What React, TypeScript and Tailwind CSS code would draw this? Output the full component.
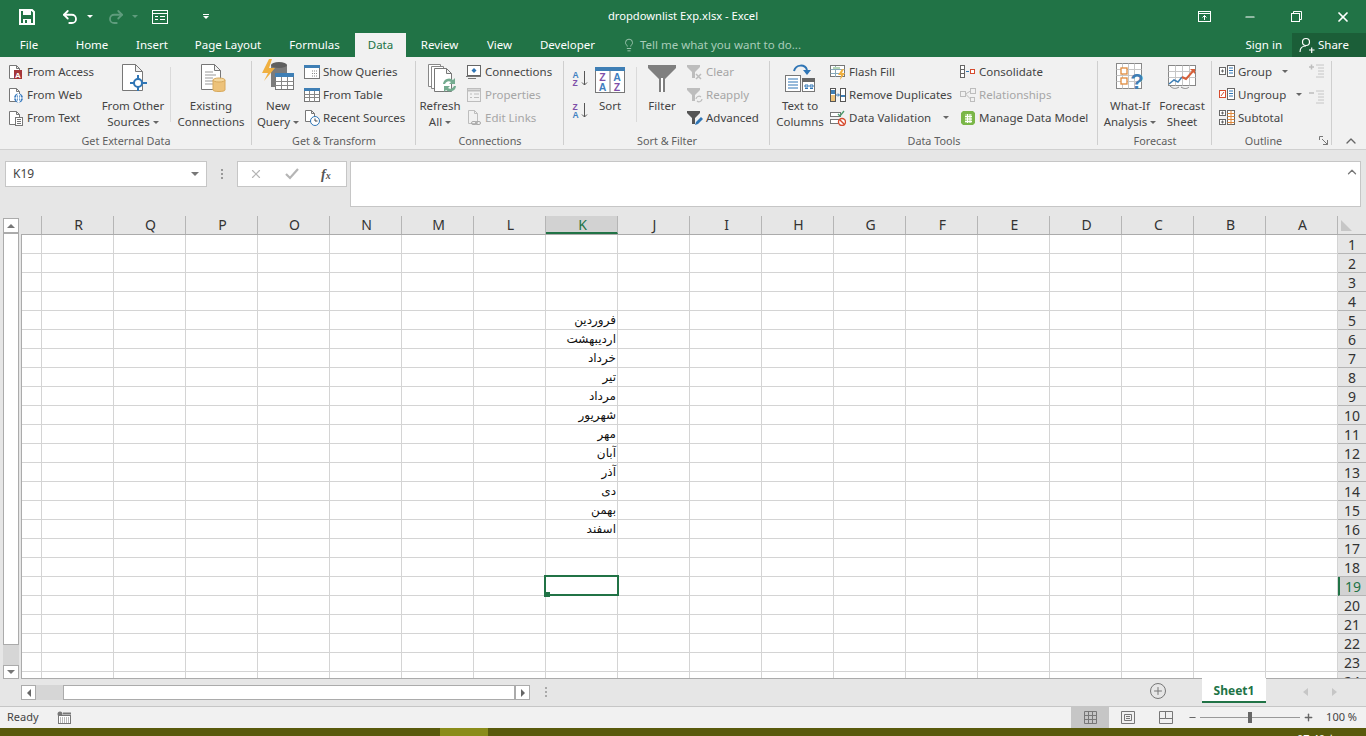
import type { ReactNode } from 'react';
import {
  ChevronUp,
  Lightbulb,
  Minus,
  Plus,
  Undo2,
  Redo2,
  X,
} from 'lucide-react';

const font = "font-['Noto_Sans','Open_Sans',sans-serif]";
const columns = ['R', 'Q', 'P', 'O', 'N', 'M', 'L', 'K', 'J', 'I', 'H', 'G', 'F', 'E', 'D', 'C', 'B', 'A'];
const months = ['فروردین', 'اردیبهشت', 'خرداد', 'تیر', 'مرداد', 'شهریور', 'مهر', 'آبان', 'آذر', 'دی', 'بهمن', 'اسفند'];
const rows = Array.from({ length: 24 }, (_, i) => i + 1);

function Caret({ className = '' }: { className?: string }) {
  return <span className={`inline-block w-0 h-0 border-x-[3px] border-x-transparent border-t-[3px] border-t-[#666] align-middle ${className}`} />;
}

function Icon({ size = 16, children }: { size?: number; children: ReactNode }) {
  return (
    <svg width={size} height={size} viewBox={`0 0 ${size} ${size}`} fill="none" className="shrink-0">
      {children}
    </svg>
  );
}

function Page({ stroke = '#777' }: { stroke?: string }) {
  return <path d="M1.500 1.500h7l3 3v10h-10z M8.500 1.500v3h3" stroke={stroke} fill="#fff" />;
}

function Small({ icon, label, off, caret, gap = 'ml-[3px]' }: { icon: ReactNode; label: string; off?: boolean; caret?: string; gap?: string }) {
  return (
    <div className={`h-[23px] flex items-center whitespace-nowrap ${off ? 'text-[#a6a6a6]' : 'text-[#444]'}`}>
      {icon}
      <span className={gap}>{label}</span>
      {caret && <Caret className={caret} />}
    </div>
  );
}

function Large({ w, icon, lines, caret, nudge = '' }: { w: string; icon: ReactNode; lines: string[]; caret?: boolean; nudge?: string }) {
  return (
    <div className={`${w} shrink-0 flex flex-col items-center text-[#444] leading-[16px] whitespace-nowrap`}>
      <div className={`h-[33px] flex items-end ${nudge}`}>{icon}</div>
      <div className="mt-[5px]">{lines[0]}</div>
      <div>
        {lines[1]}
        {caret && <Caret className="ml-[3px]" />}
      </div>
    </div>
  );
}

function Group({ w, label, children, labelPad = '' }: { w: string; label: string; children: ReactNode; labelPad?: string }) {
  return (
    <div className={`${w} shrink-0 h-full flex flex-col relative`}>
      <div className="h-[77px] pt-[3px] flex">{children}</div>
      <div className={`text-center text-[#5f5f5f] text-[10.8px] leading-[14px] ${labelPad}`}>{label}</div>
      <div className="absolute right-0 top-[4px] bottom-[4px] w-px bg-[#cfcfcf]" />
    </div>
  );
}

function Sep() {
  return <div className="w-px h-[55px] mt-[7px] bg-[#dadada] shrink-0" />;
}

const FromAccess = (
  <Icon>
    <Page />
    <rect x="6" y="6" width="8" height="9" fill="#a4373a" />
    <text x="10" y="13.500" fontSize="8" fontWeight="700" fill="#fff" textAnchor="middle" fontFamily="Liberation Sans">A</text>
  </Icon>
);
const FromWeb = (
  <Icon>
    <Page />
    <circle cx="10.500" cy="11" r="4.500" fill="#3f7fc1" />
    <path d="M6 11h9M10.500 6.500v9" stroke="#fff" />
    <ellipse cx="10.500" cy="11" rx="2" ry="4" stroke="#fff" />
  </Icon>
);
const FromText = (
  <Icon>
    <Page />
    <rect x="7.500" y="7.500" width="7" height="8" fill="#fff" stroke="#777" />
    <path d="M9 9.500h4M9 11.500h4M9 13.500h4" stroke="#777" />
  </Icon>
);
const FromOther = (
  <Icon size={30}>
    <path d="M3.500 1.500h13l7 7v19h-20z M16.500 1.500v7h7" stroke="#777" fill="#fff" />
    <circle cx="19" cy="20" r="4" stroke="#2f75b5" strokeWidth="2" fill="#fff" />
    <path d="M11 20h4M23 20h5M19 12v4M19 24v4" stroke="#2f75b5" strokeWidth="2" />
  </Icon>
);
const Existing = (
  <Icon size={30}>
    <path d="M3.500 1.500h13l6 6v19h-19z M16.500 1.500v6h6" stroke="#777" fill="#fff" />
    <path d="M7 9h8M7 12h11M7 15h8M7 18h8M7 21h8" stroke="#999" />
    <path d="M15 17v10c0 2 12 2 12 0V17z" fill="#edc27a" stroke="#d8a95c" />
    <ellipse cx="21" cy="17" rx="6" ry="2" fill="#f5d89e" stroke="#d8a95c" />
  </Icon>
);
const NewQuery = (
  <Icon size={34}>
    <path d="M10 6v22h16V6z" fill="#7b7b7b" />
    <ellipse cx="18" cy="6" rx="8" ry="3" fill="#5f5f5f" />
    <path d="M8 0 1 14h6L3 22 14 9H8l3-9z" fill="#f0b040" />
    <rect x="14.500" y="14.500" width="18" height="16" fill="#fff" stroke="#777" />
    <rect x="14" y="14" width="19" height="4" fill="#3f7fb5" />
    <path d="M14.500 22.500h18M14.500 26.500h18M20.500 18v12M26.500 18v12" stroke="#888" />
  </Icon>
);
const ShowQueries = (
  <Icon>
    <rect x="0.500" y="1.500" width="15" height="13" fill="#fff" stroke="#777" />
    <rect x="0" y="1" width="16" height="3" fill="#3f7fb5" />
    <path d="M8 7h5M8 9.500h5M8 12h5" stroke="#888" strokeDasharray="1 1" />
  </Icon>
);
const FromTable = (
  <Icon>
    <rect x="0.500" y="1.500" width="15" height="13" fill="#fff" stroke="#777" />
    <rect x="0" y="1" width="16" height="3" fill="#3f7fb5" />
    <path d="M0.500 7.500h15M0.500 10.500h15M5.500 4v11M10.500 4v11" stroke="#888" />
  </Icon>
);
const Recent = (
  <Icon>
    <path d="M1.500 0.500h6l3 3v8h-9z M7.500 0.500v3h3" stroke="#777" fill="#fff" />
    <circle cx="11" cy="11" r="4.500" fill="#fff" stroke="#2f75b5" />
    <path d="M11 8.500V11h2.500" stroke="#444" />
  </Icon>
);
const Refresh = (
  <Icon size={30}>
    <path d="M1.500 1.500h12v22h-12z" stroke="#888" fill="#fff" />
    <path d="M4.500 3.500h12v22h-12z" stroke="#888" fill="#fff" />
    <path d="M7.500 5.500h12l5 5v18h-17z M19.500 5.500v5h5" stroke="#777" fill="#fff" />
    <path d="M16 21a6 6 0 0 1 10-4l2-2v6h-6l2-2a4 4 0 0 0-6 2z" fill="#74ab8f" />
    <path d="M29 23a6 6 0 0 1-10 4l-2 2v-6h6l-2 2a4 4 0 0 0 6-2z" fill="#74ab8f" />
  </Icon>
);
const Connections = (
  <Icon>
    <rect x="1.500" y="1.500" width="13" height="10" fill="#fff" stroke="#666" />
    <path d="M8 4l2.500 2.500L8 9 5.500 6.500z" fill="#2f75b5" />
    <path d="M0 12.500h15M2 14.500h8" stroke="#777" />
  </Icon>
);
const Properties = (
  <Icon>
    <rect x="1.500" y="1.500" width="13" height="13" fill="#f1f1f1" stroke="#bdbdbd" />
    <path d="M1.500 3.500h13" stroke="#bdbdbd" strokeWidth="2" />
    <path d="M4 7h2M8 7h5M4 10.500h2M8 10.500h5" stroke="#bdbdbd" />
  </Icon>
);
const EditLinks = (
  <Icon>
    <path d="M2.500 0.500h6l3 3v10h-9z M8.500 0.500v3h3" stroke="#bdbdbd" fill="#f1f1f1" />
    <rect x="5.500" y="11.500" width="5" height="3" rx="1.500" stroke="#aaa" />
    <rect x="9.500" y="11.500" width="5" height="3" rx="1.500" stroke="#aaa" />
  </Icon>
);
function SortAZ({ top, bottom }: { top: string; bottom: string }) {
  return (
    <svg width="16" height="17" viewBox="0 0 16 17" className="shrink-0">
      <text x="0.500" y="8" fontSize="8.500" fontWeight="700" fontFamily="Liberation Sans" fill={top === 'A' ? '#3f7fc1' : '#7e4fa8'}>{top}</text>
      <text x="0.500" y="16" fontSize="8.500" fontWeight="700" fontFamily="Liberation Sans" fill={bottom === 'A' ? '#3f7fc1' : '#7e4fa8'}>{bottom}</text>
      <path d="M12.500 1v14M10 12.500l2.500 2.500 2.500-2.500" stroke="#555" fill="none" />
    </svg>
  );
}
const SortBig = (
  <svg width="30" height="26" viewBox="0 0 30 26">
    <rect x="0.500" y="0.500" width="29" height="25" fill="#fff" stroke="#777" />
    <rect x="0" y="0" width="30" height="4" fill="#3f7fb5" />
    <path d="M15 4v22" stroke="#777" />
    <g fontSize="10.500" fontWeight="700" fontFamily="Liberation Sans" textAnchor="middle">
      <text x="7.500" y="14" fill="#7e4fa8">Z</text>
      <text x="7.500" y="24" fill="#3f7fc1">A</text>
      <text x="22" y="14" fill="#3f7fc1">A</text>
      <text x="22" y="24" fill="#7e4fa8">Z</text>
    </g>
  </svg>
);
const Filter = (
  <Icon size={28}>
    <path d="M0 0h28v3L17 14v13h-6V14L0 3z" fill="#7f7f7f" />
    <path d="M13 13v14h2V13z" fill="#fff" />
  </Icon>
);
function SmallFunnel({ color }: { color: string }) {
  return <path d="M0 1h13v2L8 8v6H5V8L0 3z" fill={color} />;
}
const Clear = (
  <Icon>
    <SmallFunnel color="#bdbdbd" />
    <path d="M9 10l5 5M14 10l-5 5" stroke="#bdbdbd" strokeWidth="1.500" />
  </Icon>
);
const Reapply = (
  <Icon>
    <SmallFunnel color="#bdbdbd" />
    <path d="M9 12a3 3 0 0 1 5-2M15 12a3 3 0 0 1-5 2" stroke="#bdbdbd" strokeWidth="1.200" />
  </Icon>
);
const Advanced = (
  <Icon>
    <SmallFunnel color="#555" />
    <path d="M8 15l1-3 5-5 2 2-5 5z" fill="#2f75b5" />
  </Icon>
);
const TextCols = (
  <Icon size={30}>
    <rect x="0.500" y="12.500" width="15" height="16" fill="#fff" stroke="#777" />
    <path d="M3 16h10M3 19h10M3 22h10M3 25h10" stroke="#2f75b5" />
    <rect x="17.500" y="15.500" width="12" height="13" fill="#fff" stroke="#777" />
    <rect x="17" y="15" width="13" height="4" fill="#666" />
    <path d="M20 22h3v2h-3zM25 22h3v2h-3zM20 25.500h3M25 25.500h3" stroke="#2f75b5" />
    <path d="M9 8C11 1 20 1 22 7" stroke="#2f75b5" strokeWidth="2" />
    <path d="M18 7h8l-4 5z" fill="#2f75b5" />
  </Icon>
);
const FlashFill = (
  <Icon>
    <rect x="0.500" y="1.500" width="14" height="11" fill="#fff" stroke="#777" />
    <path d="M0.500 5.500h14M0.500 9.500h14M5.500 2v11" stroke="#8ab" />
    <rect x="3" y="3" width="7" height="2" fill="#b5d5b5" />
    <path d="M12 5l-4 6h3l-1 5 5-7h-3l2-4z" fill="#f0b040" />
  </Icon>
);
const RemoveDup = (
  <Icon>
    <rect x="0.500" y="1.500" width="5" height="13" fill="#fff" stroke="#555" />
    <rect x="10.500" y="1.500" width="5" height="13" fill="#fff" stroke="#555" />
    <path d="M1 3h4v4H1z" fill="#3f7fb5" />
    <path d="M1 8h4v6H1z" fill="#edc27a" />
    <path d="M11 8h4v2h-4z" fill="#3f7fb5" />
    <path d="M6 8h3M8 6.500 9.500 8 8 9.500" stroke="#2f75b5" />
  </Icon>
);
const DataVal = (
  <Icon>
    <rect x="0.500" y="2.500" width="10" height="4" fill="#fff" stroke="#777" />
    <rect x="0.500" y="9.500" width="9" height="4" fill="#fff" stroke="#777" />
    <path d="M8 4l2 2 4-5" stroke="#4c9a6b" strokeWidth="1.300" />
    <circle cx="12" cy="12" r="3.500" fill="#fff" stroke="#d64b2e" strokeWidth="1.400" />
    <path d="M9.500 9.500l5 5" stroke="#d64b2e" strokeWidth="1.400" />
  </Icon>
);
const Consolidate = (
  <Icon>
    <rect x="0.500" y="1.500" width="4" height="4" fill="#fff" stroke="#666" />
    <rect x="0.500" y="5.500" width="4" height="4" fill="#fff" stroke="#666" />
    <rect x="0.500" y="9.500" width="4" height="4" fill="#fff" stroke="#666" />
    <path d="M6 7.500h3" stroke="#2f75b5" />
    <rect x="10.500" y="5.500" width="4" height="4" fill="#fff" stroke="#d64b2e" />
  </Icon>
);
const Relations = (
  <Icon>
    <g stroke="#bdbdbd" fill="#f1f1f1">
      <rect x="0.500" y="4.500" width="5" height="5" />
      <rect x="10.500" y="1.500" width="5" height="5" />
      <rect x="10.500" y="10.500" width="4" height="4" />
      <path d="M5.500 7 10.500 4M5.500 7l5 5" />
    </g>
  </Icon>
);
const DataModel = (
  <Icon>
    <path d="M3 1h10l2 2v10l-2 2H3l-2-2V3z" fill="#7ab648" />
    <path d="M5 4h7v9H5z" fill="#a5d17f" />
    <path d="M5 6.500h7M5 9h7M5 11.500h7M7.500 4v9M10 4v9" stroke="#fff" />
  </Icon>
);
const WhatIf = (
  <Icon size={32}>
    <rect x="2.500" y="2.500" width="25" height="25" fill="#fff" stroke="#888" />
    <path d="M2.500 8.500h25M2.500 14.500h25M2.500 20.500h25M8.500 2.500v25M14.500 2.500v25M20.500 2.500v25" stroke="#c6c6c6" />
    <rect x="7" y="7" width="6" height="6" stroke="#e08a3c" strokeWidth="1.300" fill="#fff" />
    <rect x="7" y="17" width="6" height="6" stroke="#e08a3c" strokeWidth="1.300" fill="#fff" />
    <text x="23" y="28" fontSize="22" fontWeight="700" fontFamily="Liberation Sans" fill="#3f7fb5" textAnchor="middle">?</text>
  </Icon>
);
const Forecast = (
  <Icon size={30}>
    <rect x="1.500" y="2.500" width="27" height="20" fill="#fff" stroke="#888" />
    <path d="M1.500 8.500h27M1.500 14.500h27M8.500 2.500v20M15.500 2.500v20M22.500 2.500v20" stroke="#c6c6c6" />
    <path d="M2 21l5-4 4 2 4-5" stroke="#3f7fb5" strokeWidth="1.500" />
    <path d="M15 14l4 2 8-9" stroke="#d6603a" strokeWidth="2" />
    <path d="M23 6h5v5z" fill="#d6603a" />
    <path d="M3 23c3 3 6 3 9 1M14 24c3 2 6 2 8 0" stroke="#888" />
  </Icon>
);
function Outline({ mark }: { mark: 'plus' | 'minus' | 'sub' }) {
  return (
    <Icon>
      {mark === 'sub' ? (
        <>
          <rect x="0.500" y="0.500" width="6" height="5" fill="#fff" stroke="#666" />
          <rect x="0.500" y="9.500" width="6" height="5" fill="#fff" stroke="#666" />
          <path d="M2 3h3M3.500 1.500v3M2 12h3M3.500 10.500v3" stroke="#666" />
          <rect x="8.500" y="0.500" width="7" height="14" fill="#fff" stroke="#666" />
          <path d="M8.500 3.500h7M8.500 6.500h7M8.500 9.500h7M8.500 12.500h7M12 0.500v14" stroke="#e08a3c" />
        </>
      ) : (
        <>
          <rect x="0.500" y="3.500" width="6" height="7" fill="#fff" stroke={mark === 'plus' ? '#666' : '#d64b2e'} />
          <path d={mark === 'plus' ? 'M2 7h3M3.500 5.500v3' : 'M2 9l3-4'} stroke={mark === 'plus' ? '#666' : '#d64b2e'} />
          <rect x="8.500" y="1.500" width="7" height="11" fill="#fff" stroke="#666" />
          <path d="M10 4h4M10 6.500h4M10 9h4" stroke="#2f75b5" />
        </>
      )}
    </Icon>
  );
}
function DetailIcon({ plus }: { plus?: boolean }) {
  return (
    <Icon>
      <path d={plus ? 'M0 5h5M2.500 2.500v5' : 'M0 5h5'} stroke="#bdbdbd" strokeWidth="1.500" />
      <path d="M7 3h8M9 6h6M9 9h6M9 12h6M7 15h8" stroke="#c6c6c6" />
    </Icon>
  );
}

function TitleBar() {
  return (
    <div className="h-[33px] flex items-center relative text-white">
      <svg width="16" height="16" viewBox="0 0 16 16" className="ml-[19px] shrink-0" fill="none">
        <path d="M1 1h12l2 2v12H1z" stroke="#fff" strokeWidth="2" />
        <path d="M4 1h8v5H4zM4 10h8v5H4z" fill="#fff" />
        <path d="M6 11h2v3H6z" fill="#217346" />
      </svg>
      <Undo2 size={18} strokeWidth={2.4} className="ml-[26px]" />
      <Caret className="ml-[8px] !border-t-white" />
      <Redo2 size={18} strokeWidth={2.4} className="ml-[14px] text-[#5f9c7d]" />
      <Caret className="ml-[7px] !border-t-[#5f9c7d]" />
      <svg width="16" height="14" viewBox="0 0 16 14" className="ml-[14px]" fill="none" stroke="#fff">
        <rect x="0.500" y="0.500" width="15" height="13" />
        <path d="M0 3.500h16M3 6.500h3M3 9.500h3M8 6.500h5M8 9.500h5" />
      </svg>
      <div className="ml-[35px] flex flex-col items-center gap-[1px]">
        <div className="w-[6px] h-px bg-white" />
        <Caret className="!border-t-white" />
      </div>
      <div className="absolute left-0 right-0 text-center text-[11.2px] pointer-events-none">dropdownlist Exp.xlsx - Excel</div>
      <div className="ml-auto flex items-center">
        <svg width="14" height="11" viewBox="0 0 14 11" fill="none" stroke="#fff">
          <rect x="0.500" y="0.500" width="12" height="10" />
          <path d="M0 2.500h13M6.500 9V4.500M4.500 6.500l2-2 2 2" />
        </svg>
        <Minus size={14} strokeWidth={2} className="ml-[31px]" />
        <svg width="11" height="11" viewBox="0 0 11 11" fill="none" stroke="#fff" className="ml-[34px]">
          <rect x="0.500" y="2.500" width="8" height="8" />
          <path d="M2.500 2.500v-2h8v8h-2" />
        </svg>
        <X size={16} strokeWidth={2.600} className="ml-[33px] mr-[15px]" />
      </div>
    </div>
  );
}

function TabStrip() {
  return (
    <div className="h-[24px] flex text-[11.5px] text-white leading-[24px] relative">
      <div className="w-[58px] text-center">File</div>
      <div className="w-[68px] text-center">Home</div>
      <div className="w-[52px] text-center">Insert</div>
      <div className="w-[100px] text-center">Page Layout</div>
      <div className="w-[73px] mr-[4px] text-center">Formulas</div>
      <div className="w-[51px] text-center bg-[#f1f1f1] text-[#217346]">Data</div>
      <div className="w-[67px] text-center">Review</div>
      <div className="w-[53px] text-center">View</div>
      <div className="w-[83px] text-center">Developer</div>
      <div className="ml-[13px] flex items-center text-[#a9cdb9]">
        <Lightbulb size={14} strokeWidth={1.500} />
        <span className="ml-[4px]">Tell me what you want to do...</span>
      </div>
      <div className="ml-auto mr-[10px]">Sign in</div>
      <div className="w-[74px] bg-[#1b5e38] flex items-center">
        <svg width="16" height="16" viewBox="0 0 16 16" fill="none" stroke="#fff" strokeWidth="1.200" className="ml-[7px]">
          <circle cx="7" cy="5" r="3.500" />
          <path d="M1 15c0-4 2-6 6-6M10 13h5.500M12.700 10.500V16" />
        </svg>
        <span className="ml-[3px]">Share</span>
      </div>
    </div>
  );
}

function Ribbon() {
  return (
    <div className="h-[93px] bg-[#f1f1f1] border-b border-[#d0d0d0] flex text-[11.5px] relative">
      <Group w="w-[252px]" label="Get External Data">
        <div className="w-[96px] pl-2 shrink-0">
          <Small icon={FromAccess} label="From Access" />
          <Small icon={FromWeb} label="From Web" />
          <Small icon={FromText} label="From Text" />
        </div>
        <Large w="w-[74px]" icon={FromOther} lines={['From Other', 'Sources']} caret nudge="ml-[2px]" />
        <Sep />
        <Large w="w-[80px]" icon={Existing} lines={['Existing', 'Connections']} nudge="ml-[3px]" />
      </Group>
      <Group w="w-[164px]" label="Get & Transform">
        <Large w="w-[52px]" icon={NewQuery} lines={['New', 'Query']} caret />
        <div>
          <Small icon={ShowQueries} label="Show Queries" />
          <Small icon={FromTable} label="From Table" />
          <Small icon={Recent} label="Recent Sources" />
        </div>
      </Group>
      <Group w="w-[148px]" label="Connections">
        <Large w="w-[48px]" icon={Refresh} lines={['Refresh', 'All']} caret nudge="ml-[3px]" />
        <div className="ml-[2px]">
          <Small icon={Connections} label="Connections" />
          <Small icon={Properties} label="Properties" off />
          <Small icon={EditLinks} label="Edit Links" off />
        </div>
      </Group>
      <Group w="w-[206px]" label="Sort & Filter">
        <div className="w-[26px] pl-2 pt-[10px] shrink-0 flex flex-col gap-[15px]">
          <SortAZ top="A" bottom="Z" />
          <SortAZ top="Z" bottom="A" />
        </div>
        <Large w="w-[40px]" icon={SortBig} lines={['Sort', '']} />
        <div className="w-[6px] shrink-0" />
        <Sep />
        <Large w="w-[50px]" icon={Filter} lines={['Filter', '']} />
        <div>
          <Small icon={Clear} label="Clear" off />
          <Small icon={Reapply} label="Reapply" off />
          <Small icon={Advanced} label="Advanced" />
        </div>
      </Group>
      <Group w="w-[328px]" label="Data Tools">
        <Large w="w-[60px]" icon={TextCols} lines={['Text to', 'Columns']} />
        <div className="w-[130px] shrink-0">
          <Small icon={FlashFill} label="Flash Fill" />
          <Small icon={RemoveDup} label="Remove Duplicates" />
          <Small icon={DataVal} label="Data Validation" caret="ml-[12px]" />
        </div>
        <div>
          <Small icon={Consolidate} label="Consolidate" />
          <Small icon={Relations} label="Relationships" off />
          <Small icon={DataModel} label="Manage Data Model" />
        </div>
      </Group>
      <Group w="w-[114px]" label="Forecast">
        <div className="w-[2px] shrink-0" />
        <Large w="w-[60px]" icon={WhatIf} lines={['What-If', 'Analysis']} caret />
        <Large w="w-[44px]" icon={Forecast} lines={['Forecast', 'Sheet']} />
      </Group>
      <Group w="w-[120px]" label="Outline" labelPad="pr-[17px]">
        <div className="w-[97px] pl-[7px] shrink-0">
          <Small icon={<Outline mark="plus" />} label="Group" caret="ml-[10px]" />
          <Small icon={<Outline mark="minus" />} label="Ungroup" caret="ml-[10px]" />
          <Small icon={<Outline mark="sub" />} label="Subtotal" />
        </div>
        <div className="flex flex-col gap-[10px] pt-[2px]">
          <DetailIcon plus />
          <DetailIcon />
        </div>
        <svg width="9" height="9" viewBox="0 0 9 9" fill="none" stroke="#777" className="absolute right-[4px] bottom-[4px]">
          <path d="M.5 4V.5H4M8.500 8.500 3 3" />
          <path d="M8.500 4v4.500H4" />
        </svg>
      </Group>
      <ChevronUp size={16} strokeWidth={2} className="absolute left-[1343px] top-[76px] text-[#666]" />
    </div>
  );
}

function FormulaBar() {
  return (
    <div className="h-[66px] bg-[#e6e6e6] flex items-start pt-[11px] pl-[5px] text-[12px] relative">
      <div className="w-[202px] h-[26px] bg-white border border-[#c6c6c6] flex items-center justify-between px-[7px] text-[#444]">
        K19
        <div className="w-0 h-0 border-x-[4px] border-x-transparent border-t-[4px] border-t-[#777]" />
      </div>
      <div className="w-[30px] h-[26px] flex flex-col items-center justify-center gap-[2px]">
        <div className="w-[2px] h-[2px] bg-[#999]" />
        <div className="w-[2px] h-[2px] bg-[#999]" />
        <div className="w-[2px] h-[2px] bg-[#999]" />
      </div>
      <div className="w-[110px] h-[26px] bg-white border border-[#c6c6c6] flex items-center">
        <X size={14} strokeWidth={2} className="ml-[11px] text-[#b5b5b5]" />
        <svg width="14" height="12" viewBox="0 0 14 12" fill="none" stroke="#b5b5b5" strokeWidth="2.200" className="ml-[22px]"><path d="M1 6l4 4 8-9" /></svg>
        <span className="ml-[22px] font-['Liberation_Serif',serif] italic font-bold text-[#555] text-[14px]">f<span className="text-[10px]">x</span></span>
      </div>
      <div className="w-[1011px] h-[46px] ml-[3px] bg-white border border-[#c6c6c6]" />
      <ChevronUp size={14} strokeWidth={2.200} className="absolute left-[1345px] top-[15px] text-[#777]" />
    </div>
  );
}

function Sheet() {
  return (
    <div className="h-[463px] bg-[#e6e6e6] flex relative overflow-hidden">
      <div className="w-[21px] shrink-0 pl-[3px] pt-[2px]">
        <div className="w-[16px] h-[15px] bg-white border border-[#ababab] flex items-center justify-center">
          <div className="w-0 h-0 border-x-[4px] border-x-transparent border-b-[4px] border-b-[#777]" />
        </div>
        <div className="w-[16px] h-[412px] bg-white border border-[#ababab]" />
        <div className="w-[16px] h-[20px] bg-[#d6d6d6]" />
        <div className="w-[16px] h-[14px] bg-white border border-[#ababab] flex items-center justify-center">
          <div className="w-0 h-0 border-x-[4px] border-x-transparent border-t-[4px] border-t-[#777]" />
        </div>
      </div>
      <div className="flex-1 min-w-0">
        <div className="h-[18px] flex text-[14px] text-[#333] leading-[18px]">
          <div className="w-[21px] shrink-0 border-r border-[#b5b5b5]" />
          {columns.map((c) => (
            <div
              key={c}
              className={`w-[72px] shrink-0 text-center pl-[2px] border-r border-[#b5b5b5] ${c === 'K' ? 'bg-[#d2d2d2] border-b-2 border-b-[#217346] text-[#217346]' : ''}`}
            >
              {c}
            </div>
          ))}
          <div className="flex-1 relative">
            <div className="absolute left-[3px] bottom-[3px] w-0 h-0 border-r-[11px] border-r-transparent border-b-[11px] border-b-[#c6c6c6]" />
          </div>
        </div>
        <div className="h-[445px] overflow-hidden border-t border-l border-b border-[#ababab] bg-white">
          {rows.map((r) => (
            <div key={r} className="h-[19px] flex">
              <div className="w-[20px] shrink-0 border-r border-b border-[#d4d4d4]" />
              {columns.map((c) => (
                <div
                  key={c}
                  dir="rtl"
                  className="w-[72px] shrink-0 border-r border-b border-[#d4d4d4] pr-px font-['DejaVu_Sans',sans-serif] text-[12px] leading-[19px] text-[#111] whitespace-nowrap"
                >
                  {c === 'K' && r >= 5 && r <= 16 ? months[r - 5] : ''}
                </div>
              ))}
              <div
                className={`flex-1 border-b border-[#b5b5b5] text-center text-[14px] leading-[20px] text-[#333] ${r === 19 ? 'bg-[#d2d2d2] border-l-2 border-l-[#217346] text-[#217346]' : 'bg-[#e6e6e6]'}`}
              >
                {r}
              </div>
            </div>
          ))}
        </div>
      </div>
      {/* K19 selection */}
      <div className="absolute left-[544px] top-[359px] w-[75px] h-[21px] border-2 border-[#217346]">
        <div className="absolute left-[-2px] bottom-[-3px] w-[6px] h-[5px] bg-[#217346]" />
      </div>
    </div>
  );
}

function SheetTabs() {
  return (
    <div className="h-[28px] bg-[#e6e6e6] border-b border-[#c6c6c6] flex relative">
      <div className="ml-[21px] mt-[6px] w-[15px] h-[15px] bg-white border border-[#ababab] flex items-center justify-center">
        <div className="w-0 h-0 border-y-[4px] border-y-transparent border-r-[4px] border-r-[#666]" />
      </div>
      <div className="mt-[6px] w-[27px] h-[15px] bg-[#d6d6d6]" />
      <div className="mt-[6px] w-[452px] h-[15px] bg-white border border-[#ababab]" />
      <div className="mt-[6px] w-[15px] h-[15px] bg-white border border-[#ababab] flex items-center justify-center">
        <div className="w-0 h-0 border-y-[4px] border-y-transparent border-l-[4px] border-l-[#666]" />
      </div>
      <div className="ml-[15px] mt-[8px] flex flex-col gap-[2px]">
        <div className="w-[2px] h-[2px] bg-[#aaa]" />
        <div className="w-[2px] h-[2px] bg-[#aaa]" />
        <div className="w-[2px] h-[2px] bg-[#aaa]" />
      </div>
      <div className="ml-[603px] mt-[4px] w-[16px] h-[16px] rounded-full border border-[#777] flex items-center justify-center">
        <Plus size={12} strokeWidth={2} className="text-[#777]" />
      </div>
      <div className="ml-[36px] -mt-px w-[64px] h-[25px] pt-[2px] bg-white border-b-2 border-[#217346] text-center text-[#217346] text-[12px] font-bold leading-[22px]">
        Sheet1
      </div>
      <div className="ml-[37px] mt-[9px] w-0 h-0 border-y-[4px] border-y-transparent border-r-[5px] border-r-[#c6c6c6]" />
      <div className="ml-[24px] mt-[9px] w-0 h-0 border-y-[4px] border-y-transparent border-l-[5px] border-l-[#c6c6c6]" />
    </div>
  );
}

function StatusBar() {
  return (
    <div className="h-[21px] bg-[#f1f1f1] flex items-center text-[11px] text-[#444] relative">
      <span className="ml-[7px]">Ready</span>
      <svg width="14" height="13" viewBox="0 0 14 13" fill="none" className="ml-[18px]">
        <circle cx="3" cy="3" r="2.500" fill="#777" />
        <path d="M6 1.500h8v2H6z" fill="#777" />
        <rect x="1.500" y="4.500" width="12" height="8" fill="#fff" stroke="#777" />
        <path d="M3 7h9M3 9h9M3 11h9" stroke="#777" strokeDasharray="1 1" />
      </svg>
      <div className="ml-auto w-[38px] h-[21px] bg-[#c6c6c6] flex items-center justify-center">
        <svg width="13" height="13" viewBox="0 0 13 13" fill="none" stroke="#777"><path d="M.5.500h12v12H.5zM.5 4.500h12M.5 8.500h12M4.500.500v12M8.500.500v12" /></svg>
      </div>
      <div className="w-[38px] flex justify-center">
        <svg width="14" height="13" viewBox="0 0 14 13" fill="none" stroke="#777"><path d="M.5.500h13v12H.5zM3.500 3.500h7v6h-7zM5 5.500h4M5 7.500h4" /></svg>
      </div>
      <div className="w-[38px] flex justify-center">
        <svg width="14" height="13" viewBox="0 0 14 13" fill="none" stroke="#777"><path d="M.5.500h13v12H.5zM.5 7.500h6v-7M6.500 7.500h7" /></svg>
      </div>
      <Minus size={9} strokeWidth={3} className="ml-[3px] text-[#666]" />
      <div className="ml-[3px] w-[100px] h-px bg-[#999] relative">
        <div className="absolute left-[48px] -top-[5px] w-[4px] h-[11px] bg-[#666]" />
      </div>
      <Plus size={11} strokeWidth={3} className="ml-[3px] text-[#666]" />
      <span className="w-[52px] pr-[9px] text-right">100 %</span>
    </div>
  );
}

export default function App() {
  return (
    <div className={`w-[1366px] h-[736px] overflow-hidden bg-[#217346] ${font}`}>
      <TitleBar />
      <TabStrip />
      <Ribbon />
      <FormulaBar />
      <Sheet />
      <SheetTabs />
      <StatusBar />
      <div className="h-[8px] bg-[#595a0c] relative overflow-hidden">
        <div className="absolute left-[440px] w-[48px] h-full bg-[#8a8c1a]" />
        <span className="absolute left-[1297px] top-[5px] text-[11px] leading-none text-white">07:40 ب.ظ</span>
      </div>
    </div>
  );
}
